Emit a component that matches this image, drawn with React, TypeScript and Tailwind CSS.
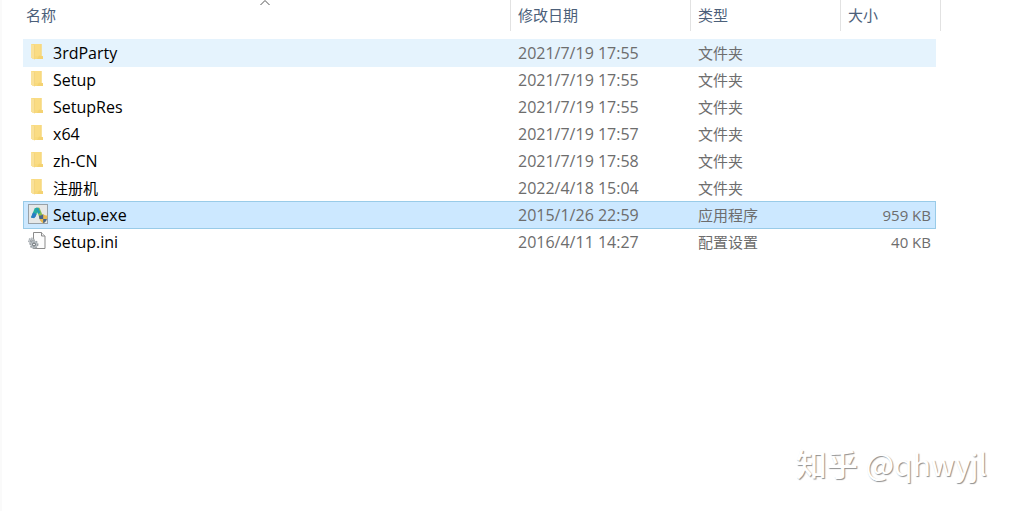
type Kind = "folder" | "app" | "config";

interface FileEntry {
  name: string;
  modified: string;
  type: string;
  size: string;
  kind: Kind;
  state?: "hover" | "selected";
}

const files: FileEntry[] = [
  { name: "3rdParty", modified: "2021/7/19 17:55", type: "文件夹", size: "", kind: "folder", state: "hover" },
  { name: "Setup", modified: "2021/7/19 17:55", type: "文件夹", size: "", kind: "folder" },
  { name: "SetupRes", modified: "2021/7/19 17:55", type: "文件夹", size: "", kind: "folder" },
  { name: "x64", modified: "2021/7/19 17:57", type: "文件夹", size: "", kind: "folder" },
  { name: "zh-CN", modified: "2021/7/19 17:58", type: "文件夹", size: "", kind: "folder" },
  { name: "注册机", modified: "2022/4/18 15:04", type: "文件夹", size: "", kind: "folder" },
  { name: "Setup.exe", modified: "2015/1/26 22:59", type: "应用程序", size: "959 KB", kind: "app", state: "selected" },
  { name: "Setup.ini", modified: "2016/4/11 14:27", type: "配置设置", size: "40 KB", kind: "config" },
];

function FolderIcon() {
  return (
    <svg viewBox="0 0 20 20" className="h-5 w-5" aria-hidden="true">
      <path d="M3 2h10.500v11.500l1.500 1V17H5l-2-1.500z" fill="#f8da7c" />
      <path d="M6.500 2H13v12H6.500z" fill="#fadc84" />
      <path d="M3 2l3.500 1.200V17.500L3 15.500z" fill="#f9e19a" />
      <path d="M6.200 3.200h.8v14h-.8z" fill="#f3d37c" />
      <path d="M12.600 2h.9v11.500h-.9z" fill="#f5d67a" />
      <path d="M11 13.500l4 .8v2.700H9z" fill="#f4d272" />
    </svg>
  );
}

function AppIcon() {
  return (
    <svg viewBox="0 0 20 20" className="h-5 w-5" aria-hidden="true">
      <rect x=".5" y=".5" width="19" height="19" fill="#e6e8e8" stroke="#98a1a8" />
      <path d="M3 13.500L6.800 4h4L8 11.500l-2 2.500z" fill="#27b0a0" />
      <path d="M3 13.500l2-5 3.500 1.500-.8 2.500-1.700 1.700z" fill="#2a7cc4" />
      <path d="M7.800 3.800h3.700L15.300 13l-4 .5z" fill="#86c04e" />
      <path d="M8 3.800h2.400l2 5-2.300 1.200-2-4z" fill="#219fb2" />
      <path d="M11 11.500c1.800 0 3-.4 4.200-1.200 1.200.8 2.400 1.200 4.200 1.200 0 4-1.200 6.200-4.200 7.700-3-1.500-4.200-3.700-4.200-7.700z" fill="#e9ba52" />
      <path d="M11 11.500c1.800 0 3-.4 4.200-1.200v4.600h-3.700c-.3-1-.5-2.100-.5-3.400z" fill="#44658c" />
      <path d="M15.200 14.900h3.700c-.6 2-1.800 3.300-3.700 4.300z" fill="#44658c" />
    </svg>
  );
}

function ConfigIcon() {
  return (
    <svg viewBox="0 0 20 20" className="h-5 w-5" aria-hidden="true">
      <path d="M5.500 1.500h8l3.500 3.500v12.500H5.500z" fill="#fcfcfc" stroke="#8b8b8b" />
      <path d="M13.500 1.500V5H17" fill="#eeeeee" stroke="#8b8b8b" />
      <circle cx="3.500" cy="10" r="2.800" fill="#c8ccd0" stroke="#aab0b4" strokeWidth="1.300" strokeDasharray="1.500 1" />
      <circle cx="3.500" cy="10" r="1" fill="#f2f4f5" stroke="#747b80" strokeWidth=".7" />
      <circle cx="6" cy="13.500" r="3.700" fill="#bdc3c7" stroke="#9ba2a7" strokeWidth="1.500" strokeDasharray="1.600 1.100" />
      <circle cx="6" cy="13.500" r="1.500" fill="#eef0f1" stroke="#60676c" strokeWidth="1" />
    </svg>
  );
}

const icons = { folder: FolderIcon, app: AppIcon, config: ConfigIcon };

function FileRow({ file }: { file: FileEntry }) {
  const Icon = icons[file.kind];
  const rowStyle =
    file.state === "selected"
      ? "border-[#99cbe8] bg-[#cce8ff]"
      : file.state === "hover"
        ? "border-[#e5f3fd] bg-[#e5f3fd]"
        : "border-transparent";
  const nameSize = /^[\x20-\x7e]+$/.test(file.name) ? "text-base" : "text-[15px]";
  return (
    <tr className="text-[#6d6d6d]">
      <td colSpan={4} className="p-0">
        <div
          className={`-mb-px grid h-7 grid-cols-[minmax(0,1fr)_180px_150px_94px] items-center border leading-5 ${rowStyle}`}
        >
          <span className={`flex items-center gap-[5px] pl-1 text-black ${nameSize}`}>
            <span className="-mt-0.5 h-5 w-5">
              <Icon />
            </span>
            {file.name}
          </span>
          <span className="pl-[7px] text-base">{file.modified}</span>
          <span className="pl-[7px]">{file.type}</span>
          <span className="pr-1 text-right">{file.size}</span>
        </div>
      </td>
      <td className="p-0" />
    </tr>
  );
}

export default function App() {
  return (
    <main className="relative flex min-h-screen flex-col border-l-2 border-[#fafafa] bg-white pr-[70px] pl-[21px] font-['Open_Sans','Noto_Sans_CJK_SC',sans-serif] text-[15px]">
      <table className="w-full table-fixed border-separate border-spacing-0">
        <colgroup>
          <col />
          <col className="w-[180px]" />
          <col className="w-[150px]" />
          <col className="w-[95px]" />
          <col className="w-[5px]" />
        </colgroup>
        <thead>
          <tr className="h-[31px] text-left leading-5 text-[#4c607a]">
            <th className="relative border-r border-[#e2e2e2] p-0 pb-0.5 pl-[3px] font-normal">
              名称
              <svg viewBox="0 0 10 6" className="absolute top-0 left-1/2 -ml-[7px] h-1.5 w-2.5" aria-hidden="true">
                <path d="M.5 5L5 .5 9.500 5" fill="none" stroke="#555" />
              </svg>
            </th>
            <th className="border-r border-[#e2e2e2] p-0 pb-0.5 pl-[7px] font-normal">修改日期</th>
            <th className="border-r border-[#e2e2e2] p-0 pb-0.5 pl-[7px] font-normal">类型</th>
            <th className="p-0 pb-0.5 pl-[7px] font-normal">大小</th>
            <td className="border-r border-[#e2e2e2] p-0" />
          </tr>
        </thead>
        <tbody>
          <tr className="h-2" aria-hidden="true">
            <td colSpan={5} className="p-0" />
          </tr>
          {files.map((file) => (
            <FileRow key={file.name} file={file} />
          ))}
        </tbody>
      </table>
      <p className="absolute right-6 bottom-7 flex items-baseline gap-2 font-['Noto_Sans_CJK_SC',sans-serif] text-[31px] leading-10 text-white [text-shadow:1px_1px_1px_#8f8f8f]">
        <span className="font-medium">知乎</span>
        <span className="text-[30px]">@qhwyjl</span>
      </p>
    </main>
  );
}
